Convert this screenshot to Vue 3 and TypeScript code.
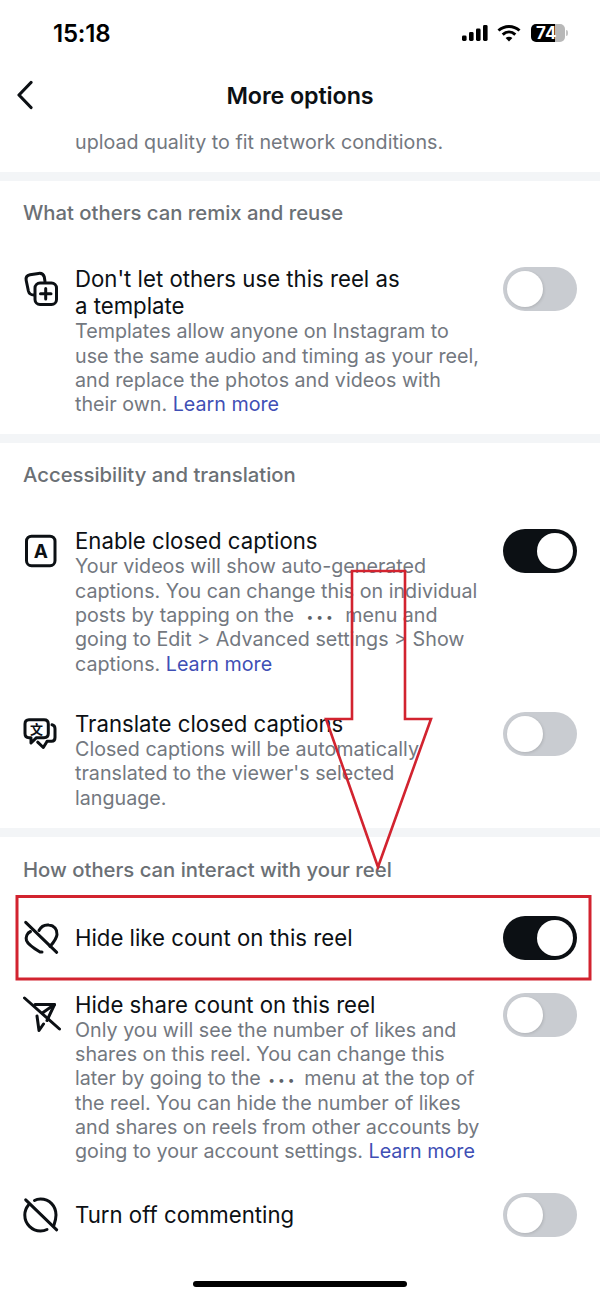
<script setup lang="ts">
const time: string = '15:18'
</script>

<template>
  <div class="phone">
    <div class="status">
      <span class="time">{{ time }}</span>
      <div class="status-icons">
        <svg class="signal" width="26" height="18" viewBox="0 0 26 18" fill="#000">
          <rect x="0" y="11.5" width="4.6" height="5.5" rx="1.4" />
          <rect x="7" y="8" width="4.6" height="9" rx="1.4" />
          <rect x="14" y="4.5" width="4.6" height="12.5" rx="1.4" />
          <rect x="21" y="1" width="4.6" height="16" rx="1.4" />
        </svg>
        <svg class="wifi" width="24" height="18" viewBox="0 0 24 18" fill="none" stroke="#000" stroke-width="3">
          <path d="M1.5 6.5 C7.5 1 16.5 1 22.5 6.5" />
          <path d="M5.7 10.6 C9.5 7.2 14.5 7.2 18.3 10.6" />
          <path d="M12 17.5 L8.6 13.9 C10.5 12.5 13.5 12.5 15.4 13.9 Z" fill="#000" stroke="none" />
        </svg>
        <div class="battery">
          <div class="battery-body"><span class="battery-level">74</span></div>
          <i class="battery-cap"></i>
        </div>
      </div>
    </div>

    <header class="nav">
      <svg class="back" width="18" height="30" viewBox="0 0 18 30" fill="none" stroke="#0c1014" stroke-width="3.2" stroke-linecap="round" stroke-linejoin="round">
        <path d="M14 2.5 L2 15 L14 27.5" />
      </svg>
      <h1 class="nav-title">More options</h1>
    </header>

    <main class="scroller">
      <section class="intro">
        <p class="desc">upload quality to fit network conditions.</p>
      </section>

      <section class="section">
        <h2 class="section-title">What others can remix and reuse</h2>
        <div class="row">
          <svg class="icon" viewBox="0 0 36 36" fill="none" stroke="#0c1014" stroke-width="3" stroke-linecap="round" stroke-linejoin="round">
            <path d="M11 24 C8 24 6 22.5 5.4 20 L3.2 9.5 C2.6 6.5 4 4.4 7 3.8 L15.5 2.4 C18.6 2 20.6 3.4 21.3 6 L22 10.6" />
            <rect x="12" y="12" width="21.5" height="21.5" rx="5" />
            <path d="M22.7 17.5 V28 M17.5 22.7 H28" />
          </svg>
          <div class="text">
            <div class="title">Don't let others use this reel as<br />a template</div>
            <p class="desc">Templates allow anyone on Instagram to<br />use the same audio and timing as your reel,<br />and replace the photos and videos with<br />their own. <a class="link">Learn more</a></p>
          </div>
          <span class="toggle"><i class="knob"></i></span>
        </div>
      </section>

      <section class="section">
        <h2 class="section-title">Accessibility and translation</h2>
        <div class="row">
          <svg class="icon" viewBox="0 0 36 36" fill="none" stroke="#0c1014" stroke-width="3">
            <rect x="3.5" y="3.2" width="28.5" height="29.5" rx="5" />
            <text class="glyph-a" x="17.8" y="25" text-anchor="middle">A</text>
          </svg>
          <div class="text">
            <div class="title">Enable closed captions</div>
            <p class="desc">Your videos will show auto-generated<br />captions. You can change this on individual<br />posts by tapping on the <span class="dots wide">•••</span> menu and<br />going to Edit &gt; Advanced settings &gt; Show<br />captions. <a class="link">Learn more</a></p>
          </div>
          <span class="toggle on"><i class="knob"></i></span>
        </div>
        <div class="row">
          <svg class="icon" viewBox="0 0 36 36" fill="none" stroke="#0c1014" stroke-width="3" stroke-linecap="round" stroke-linejoin="round">
            <path d="M6 3.8 H21 C24 3.8 25.3 5.2 25.3 8 V17.5 C25.3 20.3 24 21.7 21 21.7 H13.5 L8 27 V21.7 H6 C3.3 21.7 2 20.3 2 17.5 V8 C2 5.2 3.3 3.8 6 3.8 Z" />
            <path d="M29 8.8 C31 9.2 32 10.5 32 12.8 V21.5 C32 24 30.8 25.3 28.5 25.3 H24 V25.5 L20.3 31.5 L14.7 26.2" />
            <text class="glyph-wen" x="13.6" y="17.6" text-anchor="middle">文</text>
          </svg>
          <div class="text">
            <div class="title">Translate closed captions</div>
            <p class="desc">Closed captions will be automatically<br />translated to the viewer's selected<br />language.</p>
          </div>
          <span class="toggle"><i class="knob"></i></span>
        </div>
      </section>

      <section class="section last">
        <h2 class="section-title">How others can interact with your reel</h2>
        <div class="row single like">
          <svg class="icon" viewBox="0 0 36 36" fill="none" stroke="#0c1014" stroke-width="3" stroke-linecap="round" stroke-linejoin="round">
            <path d="M16 10.5 C18 6.5 22 4.5 26 5 C31 5.5 34.5 9.5 34 14.5 C33.7 18 31 22 27 26.5" />
            <path d="M7.5 11.5 C4 13 2.5 17 3.5 20.5 C4.5 23.5 12 29 17 32 L19 32" />
            <path d="M2.7 2.3 L33.7 32.3" />
          </svg>
          <div class="text"><div class="title">Hide like count on this reel</div></div>
          <span class="toggle on"><i class="knob"></i></span>
        </div>
        <div class="row share">
          <svg class="icon" viewBox="0 0 36 36" fill="none" stroke="#0c1014" stroke-width="3" stroke-linecap="round" stroke-linejoin="round">
            <path d="M12 7.5 H31.5 L24 23.5" />
            <path d="M31.5 7.5 L20 15.5" />
            <path d="M14 19 L16 33.5 L20.5 27" />
            <path d="M1.5 1 L36.5 32" />
          </svg>
          <div class="text">
            <div class="title">Hide share count on this reel</div>
            <p class="desc">Only you will see the number of likes and<br />shares on this reel. You can change this<br />later by going to the <span class="dots">•••</span> menu at the top of<br />the reel. You can hide the number of likes<br />and shares on reels from other accounts by<br />going to your account settings. <a class="link">Learn more</a></p>
          </div>
          <span class="toggle"><i class="knob"></i></span>
        </div>
        <div class="row single comment">
          <svg class="icon" viewBox="0 0 36 36" fill="none" stroke="#0c1014" stroke-width="3" stroke-linecap="round" stroke-linejoin="round">
            <path d="M11.5 3.5 C13.5 2.3 15.5 2 17.5 2 C26.5 2 33 9 33 18 C33 22 32 25 31 28" />
            <path d="M5.5 8 C3 11 1.8 14.5 1.8 18 C1.8 27 9 34 17.5 34 C20 34 22 33.5 24 32.5" />
            <path d="M2.7 2.8 L33.7 32.8" />
          </svg>
          <div class="text"><div class="title">Turn off commenting</div></div>
          <span class="toggle"><i class="knob"></i></span>
        </div>
      </section>
    </main>

    <svg class="annotation" width="600" height="1299" viewBox="0 0 600 1299" fill="none" stroke="#d2232f" stroke-width="3">
      <path d="M352 571 H405 V719 H431 L378 867 L326 719 H352 Z" stroke-width="2.6" />
      <rect x="17" y="896.5" width="573" height="82.5" />
    </svg>

    <div class="home"></div>
  </div>
</template>

<style scoped>
.phone {
  position: relative;
  width: 600px;
  height: 1299px;
  overflow: hidden;
  background: #fff;
  color: #0c1014;
  font-family: Inter, "Noto Sans", sans-serif;
}
.status {
  height: 48px;
  padding: 22px 32px 0 53px;
  box-sizing: border-box;
  display: flex;
  justify-content: space-between;
  align-items: flex-start;
}
.time {
  font-size: 24px;
  line-height: 24px;
  font-weight: 600;
  color: #000;
  letter-spacing: -0.2px;
}
.status-icons {
  display: flex;
  align-items: center;
  gap: 9px;
  height: 22px;
}
.wifi { margin-right: 1px; }
.battery {
  display: flex;
  align-items: center;
  gap: 1px;
}
.battery-body {
  width: 34px;
  height: 18px;
  border-radius: 5px;
  background: linear-gradient(90deg, #000 0 72%, #b8b8b8 72% 100%);
  display: flex;
  align-items: center;
  padding-left: 5px;
  box-sizing: border-box;
}
.battery-level {
  color: #fff;
  font-size: 17px;
  line-height: 18px;
  font-weight: 700;
}
.battery-cap {
  width: 2px;
  height: 6px;
  border-radius: 0 2px 2px 0;
  background: #c4c4c4;
}
.nav {
  position: relative;
  height: 80px;
  box-sizing: border-box;
  display: flex;
  align-items: center;
  justify-content: center;
  padding-top: 16px;
}
.back {
  position: absolute;
  left: 17px;
  top: 32px;
}
.nav-title {
  margin: 0;
  font-size: 23.3px;
  line-height: 28px;
  font-weight: 600;
  color: #0c1014;
  letter-spacing: -0.1px;
}
.scroller {
  height: 1171px;
  overflow: hidden;
}
.intro {
  padding: 2px 23px 18px 75px;
  border-bottom: 9px solid #f3f5f7;
}
.desc {
  margin: 0;
  font-size: 19.7px;
  line-height: 24.3px;
  color: #737880;
  font-weight: 400;
}
.link { color: #3f4fb5; }
.dots {
  font-size: 12px;
  line-height: 0;
  letter-spacing: 3px;
  vertical-align: 1px;
  color: #5f6368;
  margin: 0 1px 0 2px;
}
.dots.wide { margin: 0 4px 0 7px; }
.section {
  padding: 19px 23px 18px 23px;
  border-bottom: 9px solid #f3f5f7;
}
.section.last {
  border-bottom: 0;
  padding-top: 20px;
}
.section-title {
  margin: 0 0 39px;
  font-size: 20.3px;
  line-height: 26px;
  font-weight: 500;
  color: #6b7075;
}
.row {
  display: flex;
  align-items: flex-start;
}
.row + .row { margin-top: 34px; }
.icon {
  width: 36px;
  height: 36px;
  flex: none;
  margin-top: 6px;
  overflow: visible;
}
.text {
  flex: 1;
  margin-left: 16px;
  min-width: 0;
}
.title {
  font-size: 22.2px;
  line-height: 27px;
  color: #0c1014;
}
.toggle {
  flex: none;
  width: 74px;
  height: 44px;
  margin-top: 2px;
  border-radius: 22px;
  background: #c9ccd1;
  display: flex;
  align-items: center;
  padding: 0 4px;
  box-sizing: border-box;
  justify-content: flex-start;
}
.toggle.on {
  background: #0c1014;
  justify-content: flex-end;
}
.knob {
  width: 36px;
  height: 36px;
  border-radius: 50%;
  background: #fff;
  box-shadow: 1px 1px 3px rgba(0, 0, 0, 0.12);
}
.glyph-a {
  font-family: Inter, sans-serif;
  font-size: 19px;
  font-weight: 700;
  fill: #0c1014;
  stroke: none;
}
.glyph-wen {
  font-family: "Noto Sans CJK SC", sans-serif;
  font-size: 13px;
  font-weight: 700;
  fill: #0c1014;
  stroke: none;
}
.row.single { align-items: center; }
.row.single .toggle { margin-top: 0; }
.row.single .icon { margin-top: 0; }
.like { height: 44px; margin-top: -6px; }
.row.share { margin-top: 31px; }
.row.comment { height: 44px; margin-top: 29px; }
.annotation {
  position: absolute;
  left: 0;
  top: 0;
  pointer-events: none;
}
.home {
  position: absolute;
  left: 193px;
  top: 1281px;
  width: 214px;
  height: 6px;
  border-radius: 3px;
  background: #000;
}
</style>
